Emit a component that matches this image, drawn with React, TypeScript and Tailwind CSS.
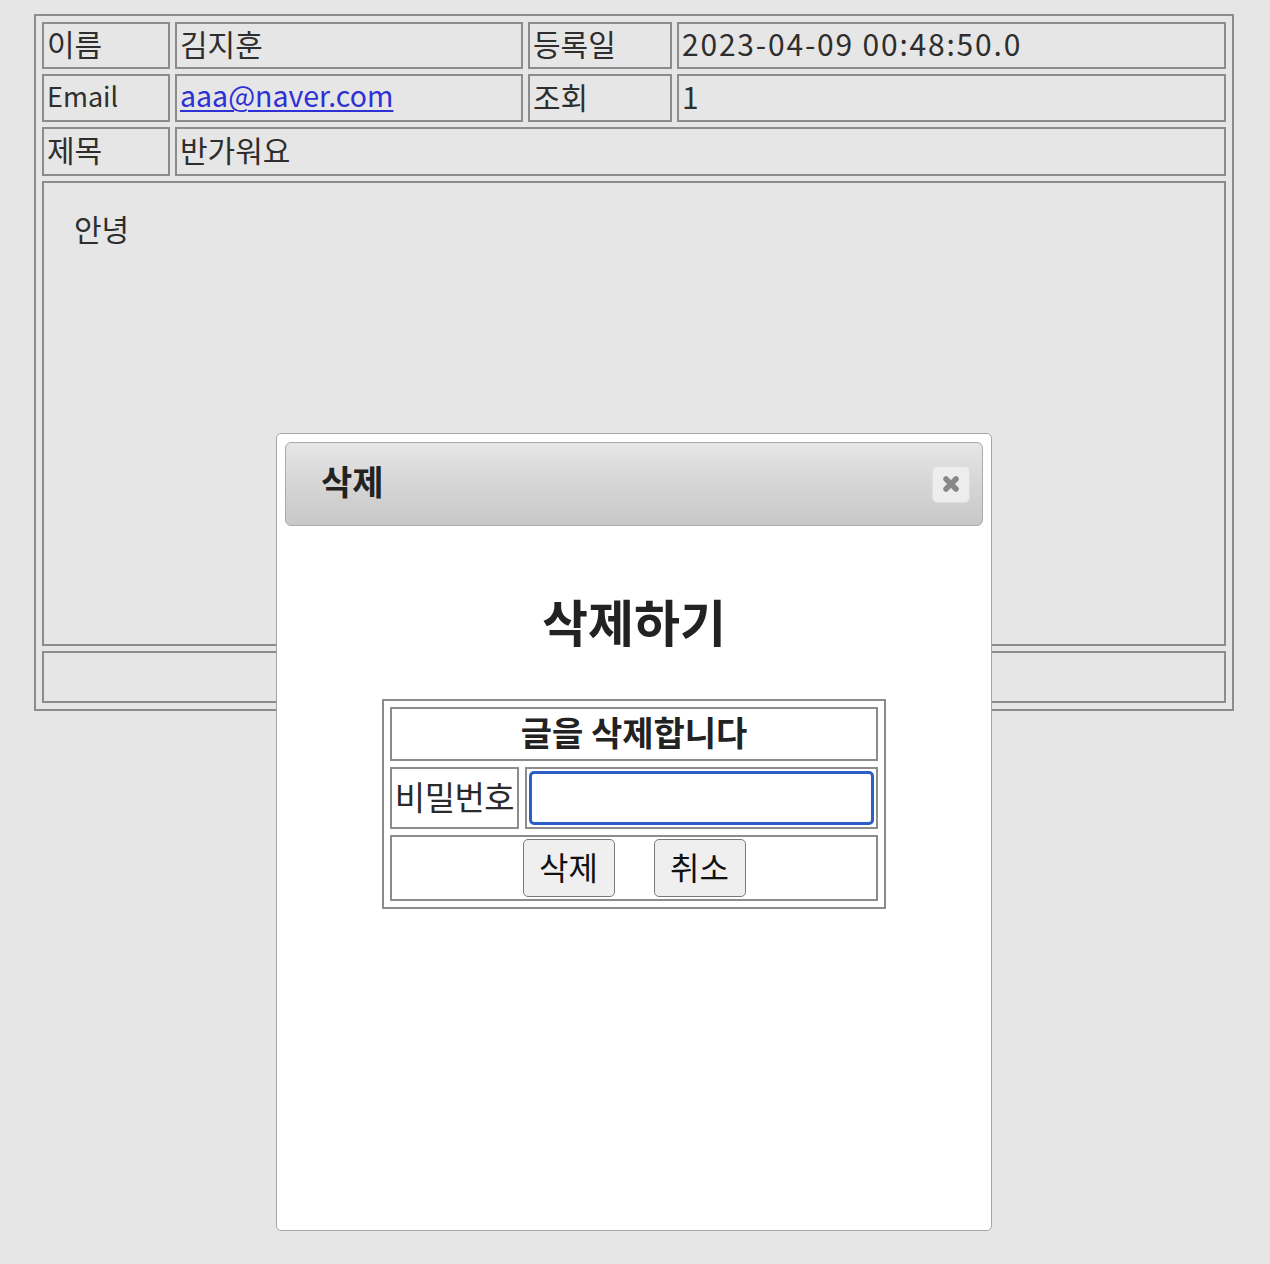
const font = { fontFamily: '"Noto Sans CJK KR", "Noto Sans", sans-serif' };

function Cell({
  children,
  className = '',
  size = 'text-[30px]',
}: {
  children?: React.ReactNode;
  className?: string;
  size?: string;
}) {
  return (
    <div className={`border-2 border-[#8c8c8c] px-[3px] pb-[5px] flex items-center leading-none text-[#2e2e2e] ${size} ${className}`}>
      {children}
    </div>
  );
}

function CloseIcon() {
  return (
    <svg width="22" height="22" viewBox="0 0 22 22">
      <path d="M6 6 L16 16 M16 6 L6 16" stroke="#888888" strokeWidth="5.5" strokeLinecap="round" />
    </svg>
  );
}

export default function App() {
  return (
    <div className="relative min-h-[1264px] w-full bg-[#e6e6e6]" style={font}>
      {/* board view */}
      <div className="absolute left-[34px] top-[14px] w-[1200px] border-2 border-[#8c8c8c] p-[6px]">
        <div className="grid grid-cols-[128px_348px_144px_1fr] grid-rows-[47px_48px_49px_465px_52px] gap-[5px]">
          <Cell>이름</Cell>
          <Cell>김지훈</Cell>
          <Cell>등록일</Cell>
          <Cell className="tracking-[1.8px]">2023-04-09 00:48:50.0</Cell>

          <Cell size="text-[27px]">Email</Cell>
          <Cell size="text-[28.5px]">
            <a href="#" className="text-[#2f2fd6] underline decoration-2 underline-offset-[3px]">
              aaa@naver.com
            </a>
          </Cell>
          <Cell>조회</Cell>
          <Cell>1</Cell>

          <Cell>제목</Cell>
          <Cell className="col-span-3">반가워요</Cell>

          <Cell className="col-span-4 items-start pl-[30px] pt-[30px]">안녕</Cell>
          <Cell className="col-span-4" />
        </div>
      </div>

      {/* delete dialog */}
      <div className="absolute left-[276px] top-[433px] w-[716px] h-[798px] rounded-[5px] border-[1.5px] border-[#a6a6a6] bg-white p-[8px]">
        <div className="flex h-[84px] items-center justify-between rounded-[6px] border-[1.5px] border-[#aaaaaa] bg-gradient-to-b from-[#e6e6e6] via-[#d6d6d6] to-[#c8c8c8] pl-[35px] pr-[12px]">
          <span className="pb-[6px] text-[34px] font-bold leading-none text-[#222]">삭제</span>
          <button className="flex h-[37px] w-[38px] items-center justify-center rounded-[5px] border border-[#dedede] bg-[#ededed]">
            <CloseIcon />
          </button>
        </div>

        <div className="flex flex-col items-center">
          <h1 className="mt-[64px] text-[50px] font-bold leading-[1.2] text-[#222]">삭제하기</h1>

          <div className="mt-[49px] w-[504px] border-2 border-[#8c8c8c] p-[6px]">
            <div className="grid grid-cols-[129px_1fr] grid-rows-[54px_62px_66px] gap-[6px]">
              <div className="col-span-2 flex items-center justify-center border-2 border-[#8c8c8c] pb-[4px] text-[34px] font-bold leading-none text-[#222]">
                글을 삭제합니다
              </div>
              <div className="flex items-center justify-center border-2 border-[#8c8c8c] pb-[4px] text-[33px] leading-none tracking-[-0.5px] text-[#2a2a2a]">
                비밀번호
              </div>
              <div className="border-2 border-[#8c8c8c] p-[2px]">
                <input
                  type="password"
                  className="h-full w-full rounded-[5px] border-[3px] border-[#2a5ec8] bg-white outline-none"
                />
              </div>
              <div className="col-span-2 flex items-center justify-center gap-[39px] border-2 border-[#8c8c8c]">
                <button className="h-[58px] w-[92px] rounded-[5px] border-[1.5px] border-[#7a7a7a] bg-[#efefef] pb-[4px] text-[32px] leading-none text-[#111]">
                  삭제
                </button>
                <button className="h-[58px] w-[92px] rounded-[5px] border-[1.5px] border-[#7a7a7a] bg-[#efefef] pb-[4px] text-[32px] leading-none text-[#111]">
                  취소
                </button>
              </div>
            </div>
          </div>
        </div>
      </div>
    </div>
  );
}
